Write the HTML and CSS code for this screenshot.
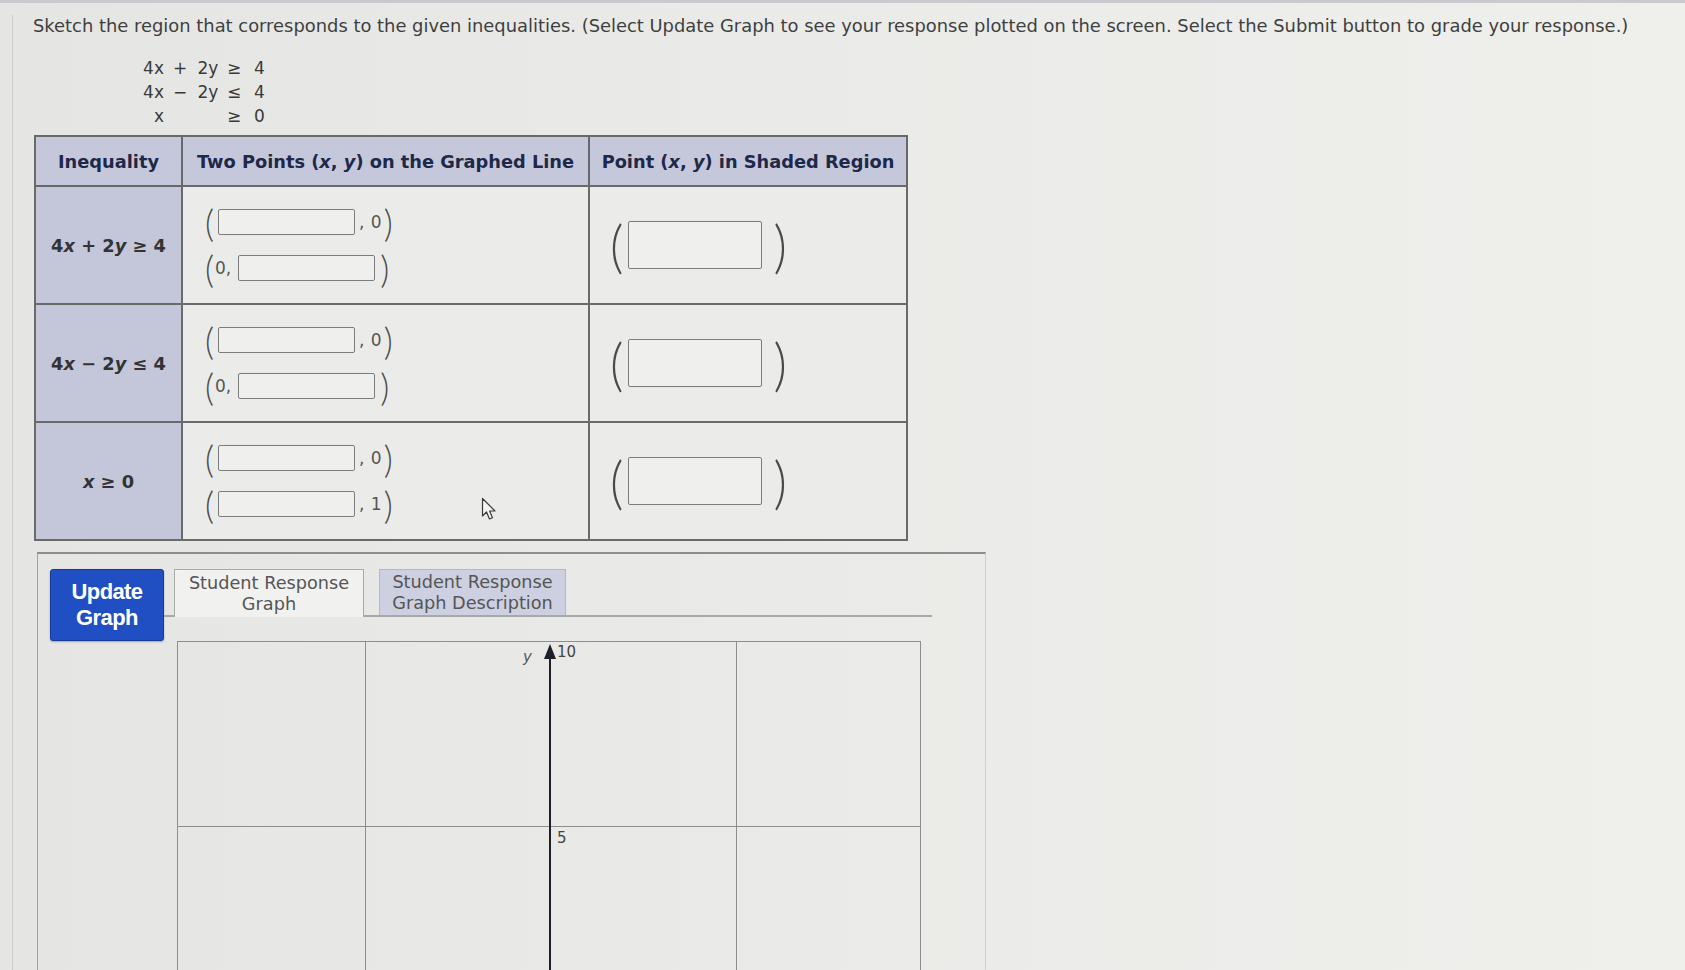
FILE: index.html
```html
<!DOCTYPE html>
<html lang="en">
<head>
<meta charset="utf-8">
<title>Sketch the region</title>
<link rel="stylesheet" href="styles.css">
</head>
<body>
<div class="topbar"></div>
<div class="page">
  <p class="prompt">Sketch the region that corresponds to the given inequalities. (Select Update Graph to see your response plotted on the screen. Select the Submit button to grade your response.)</p>

  <div class="system">
    <span class="r">4x</span><span>+</span><span>2y</span><span>≥</span><span class="l">4</span>
    <span class="r">4x</span><span>−</span><span>2y</span><span>≤</span><span class="l">4</span>
    <span class="r">x</span><span></span><span></span><span>≥</span><span class="l">0</span>
  </div>

  <table class="ineq">
    <colgroup>
      <col class="w1"><col class="w2"><col class="w3">
    </colgroup>
    <thead>
      <tr>
        <th>Inequality</th>
        <th>Two Points (<i>x</i>, <i>y</i>) on the Graphed Line</th>
        <th>Point (<i>x</i>, <i>y</i>) in Shaded Region</th>
      </tr>
    </thead>
    <tbody>
      <tr>
        <td class="lab">4<i>x</i> + 2<i>y</i> ≥ 4</td>
        <td class="pts">
          <div class="pt"><span class="par">(</span><span class="box"></span><span class="sep">, 0</span><span class="par">)</span></div>
          <div class="pt"><span class="par">(</span><span class="pre">0,</span><span class="box"></span><span class="par">)</span></div>
        </td>
        <td class="sh">
          <div class="pt big"><span class="par">(</span><span class="box lg"></span><span class="par">)</span></div>
        </td>
      </tr>
      <tr>
        <td class="lab">4<i>x</i> − 2<i>y</i> ≤ 4</td>
        <td class="pts">
          <div class="pt"><span class="par">(</span><span class="box"></span><span class="sep">, 0</span><span class="par">)</span></div>
          <div class="pt"><span class="par">(</span><span class="pre">0,</span><span class="box"></span><span class="par">)</span></div>
        </td>
        <td class="sh">
          <div class="pt big"><span class="par">(</span><span class="box lg"></span><span class="par">)</span></div>
        </td>
      </tr>
      <tr>
        <td class="lab"><i>x</i> ≥ 0</td>
        <td class="pts">
          <div class="pt"><span class="par">(</span><span class="box"></span><span class="sep">, 0</span><span class="par">)</span></div>
          <div class="pt"><span class="par">(</span><span class="box"></span><span class="sep">, 1</span><span class="par">)</span></div>
        </td>
        <td class="sh">
          <div class="pt big"><span class="par">(</span><span class="box lg"></span><span class="par">)</span></div>
        </td>
      </tr>
    </tbody>
  </table>

  <div class="panel">
    <div class="panel-top">
      <button class="update">Update<br>Graph</button>
      <div class="tabs">
        <div class="tab active">Student Response<br>Graph</div>
        <div class="tab other">Student Response<br>Graph Description</div>
      </div>
    </div>
    <div class="graph">
      <svg width="744" height="330" viewBox="0 0 744 330" xmlns="http://www.w3.org/2000/svg">
        <g stroke="#8e8e8e" stroke-width="1" fill="none">
          <line x1="0.5" y1="0" x2="0.5" y2="330"/>
          <line x1="188.5" y1="0" x2="188.5" y2="330"/>
          <line x1="559.5" y1="0" x2="559.5" y2="330"/>
          <line x1="743.5" y1="0" x2="743.5" y2="330"/>
          <line x1="0" y1="0.5" x2="744" y2="0.5"/>
          <line x1="0" y1="185.5" x2="744" y2="185.5"/>
        </g>
        <line x1="373" y1="14" x2="373" y2="330" stroke="#1f1f2a" stroke-width="2"/>
        <polygon points="373,3 367,18 379,18" fill="#1f1f2a"/>
        <text x="346" y="21" class="ax-y">y</text>
        <text x="380" y="16" class="ax-n">10</text>
        <text x="380" y="202" class="ax-n">5</text>
      </svg>
    </div>
  </div>
</div>

<svg class="cursor" width="18" height="25" viewBox="0 0 18 25" xmlns="http://www.w3.org/2000/svg">
  <path d="M1.5 1.5 L1.5 19 L5.5 15 L8.5 22 L11.5 20.8 L8.6 14 L14 14 Z" fill="#f4f4f2" stroke="#3a3a3a" stroke-width="1.2" stroke-linejoin="round"/>
</svg>
</body>
</html>
```

FILE: styles.css
```css
* { box-sizing: border-box; }

html, body {
  margin: 0;
  padding: 0;
}

body {
  width: 1685px;
  height: 970px;
  overflow: hidden;
  position: relative;
  background: linear-gradient(90deg, #e5e6e3 0%, #eaebe8 45%, #efefec 100%);
  font-family: "DejaVu Sans", Verdana, sans-serif;
  color: #3d3d3d;
}

.topbar {
  height: 3px;
  background: #c8cacd;
}

.page {
  margin-left: 12px;
  border-left: 1px solid #c9cac7;
  padding-left: 20px;
  height: 967px;
}

.prompt {
  margin: 12px 0 0;
  font-size: 17.9px;
  line-height: 22px;
  color: #3f3f3f;
  white-space: nowrap;
}

.system {
  display: grid;
  grid-template-columns: 24px 28px 28px 24px 24px;
  margin: 19px 0 0 109px;
  font-size: 17px;
  line-height: 24px;
  color: #3a3a3a;
  text-align: center;
  width: 128px;
}

.system .r { text-align: right; padding-right: 2px; }
.system .l { text-align: left; padding-left: 8px; }

.ineq {
  margin: 7px 0 0 1px;
  border-collapse: collapse;
  table-layout: fixed;
  width: 872px;
}

.w1 { width: 147px; }
.w2 { width: 407px; }
.w3 { width: 318px; }

.ineq th {
  height: 50px;
  padding: 0;
  background: #c5c8da;
  color: #1e2849;
  font-weight: bold;
  font-size: 17.8px;
  border: 2px solid #686868;
  white-space: nowrap;
}

.ineq td {
  height: 118px;
  padding: 0;
  border: 2px solid #6a6a6a;
  background: #ebece9;
  vertical-align: middle;
}

.ineq td.lab {
  background: #c4c7d9;
  text-align: center;
  font-weight: bold;
  font-size: 17.8px;
  color: #333;
}

.ineq td.pts { padding-left: 22px; }
.ineq td.sh { padding-left: 20px; }

.pt {
  display: flex;
  align-items: center;
  height: 46px;
}

.par {
  display: inline-block;
  font-family: Lato, "DejaVu Sans", sans-serif;
  font-weight: 300;
  font-size: 35px;
  line-height: 36px;
  color: #4a4a4a;
  transform: scaleY(1.06);
}

.box {
  width: 137px;
  height: 26px;
  border: 1px solid #7c7c7c;
  border-radius: 2px;
  background: #efefed;
  margin-left: 4px;
}

.sep {
  font-size: 17px;
  margin-left: 4px;
  color: #555;
  word-spacing: 1px;
}

.pre {
  font-size: 17px;
  margin-left: 1px;
  color: #555;
}

.pre + .box { margin-left: 7px; }
.sep + .par { margin-left: 2px; }
.box + .par { margin-left: 5px; }

.big .par {
  font-size: 52px;
  line-height: 52px;
  transform: scaleY(1.08);
}

.box.lg {
  width: 134px;
  height: 48px;
  margin-left: 5px;
}

.big .box + .par { margin-left: 11px; }

.panel {
  margin: 11px 0 0 4px;
  width: 949px;
  height: 430px;
  border-top: 2px solid #8d8d8d;
  border-left: 1px solid #a3a3a3;
  border-right: 1px solid #d0d0ce;
  padding: 15px 0 0 12px;
}

.panel-top {
  display: flex;
  align-items: flex-start;
  height: 72px;
}

.update {
  width: 114px;
  height: 72px;
  padding: 0;
  background: #1f4fc3;
  border: 1px solid #163c98;
  border-radius: 3px;
  color: #fff;
  font-family: "Liberation Sans", Arial, sans-serif;
  font-weight: bold;
  font-size: 22px;
  line-height: 26px;
  letter-spacing: -0.6px;
  box-shadow: 0 1px 2px rgba(0, 0, 0, 0.3);
}

.tabs {
  display: flex;
  align-items: flex-end;
  width: 768px;
  height: 48px;
  border-bottom: 2px solid #a8a8a8;
  padding-left: 10px;
}

.tab {
  font-size: 17.7px;
  line-height: 21px;
  color: #555;
  text-align: center;
  border: 1px solid #aaaaaa;
  border-bottom: 0;
  white-space: nowrap;
}

.tab.active {
  width: 190px;
  height: 48px;
  margin-bottom: -2px;
  padding-top: 3px;
  background: #f1f1ef;
}

.tab.other {
  width: 187px;
  height: 46px;
  margin-left: 15px;
  padding-top: 2px;
  background: #cdd0e0;
  border-color: #b4b7c8;
}

.graph {
  margin-left: 127px;
  width: 744px;
  height: 330px;
}

.graph svg { display: block; }

.ax-y {
  font-family: "DejaVu Sans", sans-serif;
  font-style: italic;
  font-size: 15px;
  fill: #555;
}

.ax-n {
  font-family: "DejaVu Sans", sans-serif;
  font-size: 15px;
  fill: #444;
}

.cursor {
  position: absolute;
  left: 481px;
  top: 497px;
}
```
